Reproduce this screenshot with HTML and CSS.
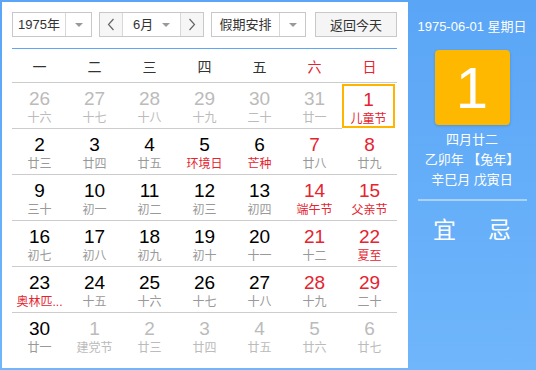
FILE: index.html
```html
<!DOCTYPE html>
<html lang="zh-CN">
<head>
    <meta charset="UTF-8">
    <title>万年历</title>
    <link rel="stylesheet" href="styles.css">
</head>
<body>
    <div class="calendar">
        <div class="main">
            <div class="controls">
                <div class="select year-select">
                    <span class="select-text">1975年</span>
                    <span class="select-arrow"><i class="tri"></i></span>
                </div>
                <div class="select month-select">
                    <span class="nav-btn">
                        <svg width="8" height="13" viewBox="0 0 8 13"><path d="M6.5 1 L1.5 6.5 L6.5 12" fill="none" stroke="#666" stroke-width="1.2"/></svg>
                    </span>
                    <span class="month-text">6月<i class="tri"></i></span>
                    <span class="nav-btn">
                        <svg width="8" height="13" viewBox="0 0 8 13"><path d="M1.5 1 L6.5 6.5 L1.5 12" fill="none" stroke="#666" stroke-width="1.2"/></svg>
                    </span>
                </div>
                <div class="select holiday-select">
                    <span class="select-text">假期安排</span>
                    <span class="select-arrow"><i class="tri"></i></span>
                </div>
                <button class="today-btn">返回今天</button>
            </div>

            <div class="week-head">
                <span>一</span><span>二</span><span>三</span><span>四</span><span>五</span>
                <span class="red">六</span><span class="red">日</span>
            </div>

            <div class="days" id="days"></div>
        </div>

        <div class="side">
            <div class="side-date">1975-06-01 星期日</div>
            <div class="big-day">1</div>
            <div class="lunar-info">
                <div>四月廿二</div>
                <div>乙卯年 【兔年】</div>
                <div>辛巳月 戊寅日</div>
            </div>
            <div class="side-line"></div>
            <div class="yi-ji">
                <span>宜</span><span>忌</span>
            </div>
        </div>
    </div>

    <script>
        // [day, lunar text, other month?, red lunar?, weekend/red number?, selected?]
        const days = [
            ["26", "十六", 1], ["27", "十七", 1], ["28", "十八", 1], ["29", "十九", 1],
            ["30", "二十", 1], ["31", "廿一", 1], ["1", "儿童节", 0, 1, 1, 1],
            ["2", "廿三"], ["3", "廿四"], ["4", "廿五"], ["5", "环境日", 0, 1],
            ["6", "芒种", 0, 1], ["7", "廿八", 0, 0, 1], ["8", "廿九", 0, 0, 1],
            ["9", "三十"], ["10", "初一"], ["11", "初二"], ["12", "初三"],
            ["13", "初四"], ["14", "端午节", 0, 1, 1], ["15", "父亲节", 0, 1, 1],
            ["16", "初七"], ["17", "初八"], ["18", "初九"], ["19", "初十"],
            ["20", "十一"], ["21", "十二", 0, 0, 1], ["22", "夏至", 0, 1, 1],
            ["23", "奥林匹...", 0, 1], ["24", "十五"], ["25", "十六"], ["26", "十七"],
            ["27", "十八"], ["28", "十九", 0, 0, 1], ["29", "二十", 0, 0, 1],
            ["30", "廿一"], ["1", "建党节", 1], ["2", "廿三", 1], ["3", "廿四", 1],
            ["4", "廿五", 1], ["5", "廿六", 1], ["6", "廿七", 1]
        ];

        const box = document.getElementById("days");
        days.forEach(d => {
            const cell = document.createElement("div");
            let cls = "day";
            if (d[2]) cls += " other";
            if (d[3]) cls += " fest";
            if (d[4]) cls += " weekend";
            if (d[5]) cls += " selected";
            cell.className = cls;
            cell.innerHTML = `<span class="num">${d[0]}</span><span class="lunar">${d[1]}</span>`;
            box.appendChild(cell);
        });
    </script>
</body>
</html>
```

FILE: styles.css
```css
body {
    margin: 0;
    font-family: "Liberation Sans", Arial, "Noto Sans CJK SC", sans-serif;
    background: #fff;
}
.calendar {
    width: 536px;
    height: 370px;
    box-sizing: border-box;
    display: flex;
    padding: 2px 0 2px 2px;
    background: linear-gradient(#5aa5f6, #6fb6fb);
}
.main {
    width: 406px;
    background: #fff;
    padding: 10px 11px 0 10px;
    box-sizing: border-box;
}

/* top controls */
.controls {
    display: flex;
    height: 25px;
    font-size: 13px;
    color: #333;
}
.select {
    display: flex;
    border: 1px solid #c8c8c8;
    box-sizing: border-box;
    height: 25px;
    line-height: 23px;
}
.year-select {
    width: 80px;
    margin-right: 7px;
}
.month-select {
    width: 105px;
    margin-right: 7px;
}
.holiday-select {
    width: 95px;
    margin-right: 9px;
}
.select-text {
    flex: 1;
    text-align: center;
}
.select-arrow {
    width: 25px;
    border-left: 1px solid #d8d8d8;
    display: flex;
    align-items: center;
    justify-content: center;
}
.tri {
    display: inline-block;
    width: 0;
    height: 0;
    border-left: 4px solid transparent;
    border-right: 4px solid transparent;
    border-top: 4px solid #999;
}
.nav-btn {
    width: 22px;
    background: #f6f6f6;
    display: flex;
    align-items: center;
    justify-content: center;
}
.nav-btn:first-child {
    border-right: 1px solid #d8d8d8;
}
.nav-btn:last-child {
    border-left: 1px solid #d8d8d8;
}
.month-text {
    flex: 1;
    display: flex;
    align-items: center;
    justify-content: space-between;
    padding: 0 10px 0 10px;
}
.today-btn {
    width: 82px;
    height: 25px;
    border: 1px solid #c8c8c8;
    background: #f5f5f5;
    font-family: inherit;
    font-size: 13px;
    color: #333;
    padding: 0;
}

/* week header */
.week-head {
    display: grid;
    grid-template-columns: repeat(7, 55px);
    margin-top: 11px;
    border-top: 1px solid #5ea7f7;
    border-bottom: 1px solid #cccccc;
    height: 33px;
    align-items: center;
    text-align: center;
    font-size: 14px;
    color: #333;
}
.red {
    color: #e6232f;
}

/* days */
.days {
    display: grid;
    grid-template-columns: repeat(7, 55px);
    grid-auto-rows: 46px;
}
.day {
    display: flex;
    flex-direction: column;
    align-items: center;
    box-sizing: border-box;
    padding-top: 5px;
    border-bottom: 1px solid #cccccc;
}
.day:nth-last-child(-n+7) {
    border-bottom: none;
}
.num {
    font-size: 19px;
    line-height: 22px;
    color: #000;
}
.lunar {
    font-size: 12px;
    line-height: 16px;
    color: #999;
}
.weekend .num {
    color: #e6232f;
}
.fest .lunar {
    color: #e6232f;
}
.other .num,
.other .lunar {
    color: #bbbbbb;
}
.day.selected {
    border: 2px solid #ffb400;
    margin: 1px 2px 1px 0;
    padding-top: 3px;
}
.day.selected .num {
    color: #e6232f;
}

/* right side */
.side {
    flex: 1;
    color: #fff;
    text-align: center;
    display: flex;
    flex-direction: column;
    align-items: center;
}
.side-date {
    font-size: 13px;
    margin-top: 16px;
    line-height: 18px;
}
.big-day {
    width: 75px;
    height: 75px;
    margin-top: 14px;
    background: #ffb800;
    border-radius: 4px;
    font-size: 58px;
    line-height: 75px;
    box-shadow: 0 1px 3px rgba(0, 0, 0, 0.15);
}
.lunar-info {
    margin-top: 5px;
    font-size: 13px;
    line-height: 20px;
}
.side-line {
    align-self: stretch;
    margin: 9px 9px 0 10px;
    height: 2px;
    background: rgba(255, 255, 255, 0.45);
}
.yi-ji {
    display: flex;
    gap: 32px;
    margin-top: 14px;
    font-size: 23px;
    line-height: 30px;
}
```
